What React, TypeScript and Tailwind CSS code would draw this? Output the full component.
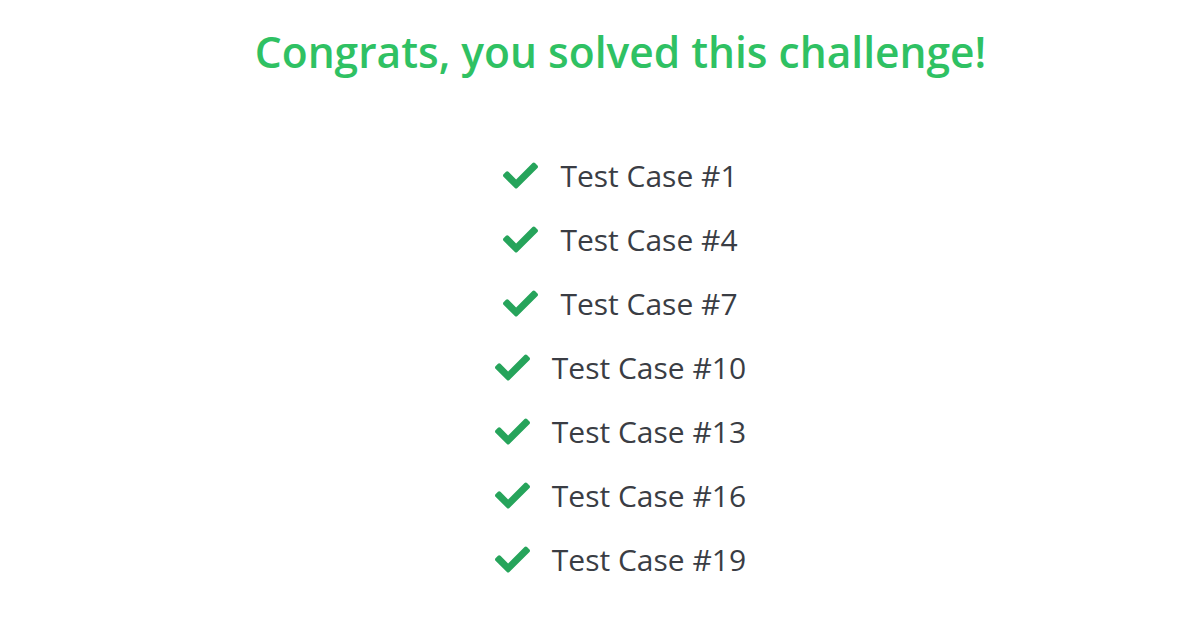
import { FaCheck } from "react-icons/fa";

const cases = [1, 4, 7, 10, 13, 16, 19];

export default function App() {
  return (
    <div className="min-h-screen bg-white pl-[58px] font-['Open_Sans',sans-serif]">
      <div className="flex flex-col items-center pt-[26px]">
        <h1 className="text-[42.5px] leading-[52px] font-semibold text-[#2fc163]">
          Congrats, you solved this challenge!
        </h1>
        <ul className="mt-[75px] flex flex-col gap-[20px]">
          {cases.map((n) => (
            <li key={n} className="flex items-center justify-center gap-[22px] h-[44px]">
              <FaCheck className="text-[#26a45b] w-[35px] h-[35px]" />
              <span className="text-[30px] text-[#3a3d44]">Test Case #{n}</span>
            </li>
          ))}
        </ul>
      </div>
    </div>
  );
}
